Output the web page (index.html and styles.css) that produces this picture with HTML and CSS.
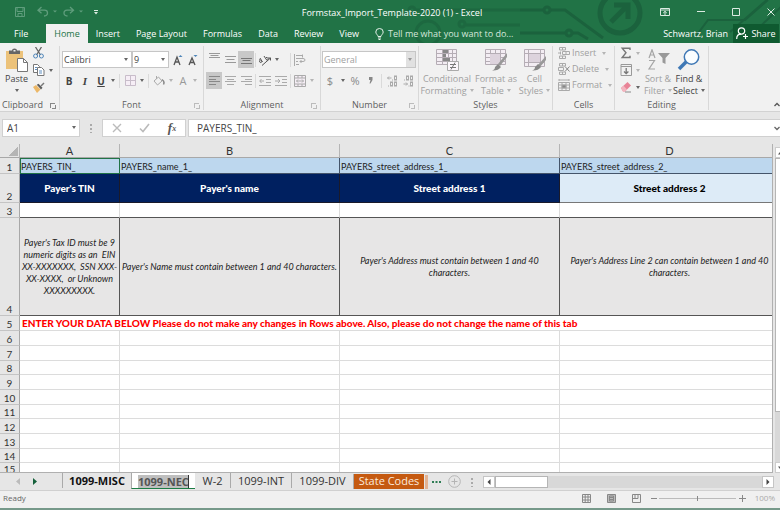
FILE: index.html
```html
<!DOCTYPE html>
<html lang="en">
<head>
<meta charset="utf-8">
<title>Formstax_Import_Template-2020 (1) - Excel</title>
<link rel="stylesheet" href="styles.css">
</head>
<body>
<div class="app">
<header class="top">
  <svg class="circuit" width="380" height="43" viewBox="0 0 380 43" fill="none" stroke="#1b623d" stroke-width="3">
    <g opacity=".6"><circle cx="12" cy="10" r="3"/><path d="M16 10H120"/><circle cx="28" cy="33" r="12"/>
    <circle cx="62" cy="24" r="3"/><path d="M66 25H120"/></g>
    <path d="M120 10H144M150 10H165L203 38M120 33H166M172 33H178L188 39"/><circle cx="147" cy="10" r="3"/><circle cx="169" cy="33" r="3"/>
    <circle cx="220" cy="13" r="20" stroke-width="5"/><path d="M211 22L228 5M214 5H228V19" stroke-width="5"/>
    <path d="M296 36L308 20H345L368 0M330 32L376 -8M350 36L384 4" stroke-width="2"/>
  </svg>
  <div class="titlebar">
    <div class="quick">
      <button aria-label="Save"><svg width="12" height="12" viewBox="0 0 12 12" fill="none" stroke="#5f9d7c"><path d="M1.500 1.500h9v9h-9zM3 1.500v4h6v-4M4 10.500v-3h4v3"/></svg></button>
      <button aria-label="Undo"><svg width="20" height="12" viewBox="0 0 20 12" fill="none" stroke="#5f9d7c" stroke-width="1.300"><path d="M4.500 1L1 4.200l3.500 3M1 4.200h6.500q3 0 3 2.800t-3.500 3"/><path d="M16 4.500h4l-2 2z" fill="#5f9d7c" stroke="none"/></svg></button>
      <button aria-label="Redo"><svg width="20" height="12" viewBox="0 0 20 12" fill="none" stroke="#5f9d7c" stroke-width="1.300"><path d="M7 1l3.500 3.200L7 7.200M10.500 4.200H4q-3 0-3 2.800t3.500 3"/><path d="M16 4.500h4l-2 2z" fill="#5f9d7c" stroke="none"/></svg></button>
      <button class="customize" aria-label="Customize"><svg width="6" height="12" viewBox="0 0 6 12" fill="#dcebe2"><path d="M1 4h4v1H1zM1 6h4L3 8.500z"/></svg></button>
    </div>
    <h1 class="doc-title">Formstax_Import_Template-2020 (1) - Excel</h1>
    <div class="window-buttons">
      <button aria-label="Ribbon options"><svg width="10" height="8" viewBox="0 0 10 8" fill="none" stroke="#dcebe2"><path d="M.5.5h9v7h-9zM.5 2h9M5 7V3.500M3.200 5L5 3.300 6.800 5"/></svg></button>
      <button aria-label="Minimize"><svg width="8" height="8" viewBox="0 0 8 8" stroke="#dcebe2"><path d="M0 3.500h8"/></svg></button>
      <button aria-label="Maximize"><svg width="8" height="8" viewBox="0 0 8 8" fill="none" stroke="#dcebe2"><path d="M.5.5h7v7h-7z"/></svg></button>
      <button aria-label="Close"><svg width="8" height="8" viewBox="0 0 8 8" stroke="#dcebe2"><path d="M.5.5l7 7M7.500.5l-7 7"/></svg></button>
    </div>
  </div>
  <nav class="menu">
    <a class="file" href="#">File</a><a class="current" href="#">Home</a><a href="#">Insert</a><a href="#">Page Layout</a><a href="#">Formulas</a><a href="#">Data</a><a href="#">Review</a><a href="#">View</a>
    <a class="tell" href="#"><svg width="9" height="12" viewBox="0 0 9 12" fill="none" stroke="#e6f1ea"><path d="M3 8.500C3 7 .8 6 .8 4a3.700 3.500 0 0 1 7.400 0C8.200 6 6 7 6 8.500zM3 10h3M3.500 11.500h2"/></svg>Tell me what you want to do...</a>
    <span class="user">Schwartz, Brian</span>
    <button class="share"><svg width="12" height="13" viewBox="0 0 12 13" fill="none" stroke="#fff" stroke-width="1.200"><circle cx="5.500" cy="4" r="3.200"/><path d="M.7 12c0-3 1.800-4.800 4.300-4.800M7 9.500h5M9.500 7v5"/></svg>Share</button>
  </nav>
</header>

<div class="ribbon">
  <section class="group clipboard">
    <div class="body">
      <button class="paste"><svg width="24" height="24" viewBox="0 0 24 24"><path d="M1 3h17v18H1z" fill="#ecc27a"/><path d="M4 2.500h3Q7 .5 9.500.5T12 2.500h3V6H4z" fill="#666"/><path d="M8.500 2h2v1.500h-2z" fill="#eee"/><path d="M12.500 10.500h6l4 4v9h-10z" fill="#fff" stroke="#777"/><path d="M18.500 10.500v4h4" fill="none" stroke="#777"/></svg><span>Paste</span><i class="caret"></i></button>
      <div class="stack">
        <button aria-label="Cut"><svg width="11" height="12" viewBox="0 0 11 12" fill="none"><path d="M2.500 0L7.500 8M8.500 0L3.500 8" stroke="#666" stroke-width="1.300"/><circle cx="2.600" cy="9" r="2" stroke="#4d84b8"/><circle cx="8.400" cy="9" r="2" stroke="#4d84b8"/></svg></button>
        <button aria-label="Copy" class="with-caret"><svg width="12" height="12" viewBox="0 0 12 12" fill="#fff" stroke="#777"><path d="M.5.5h4l2 2v6h-6z"/><path d="M4.500 3.500h4l2.500 2.500v5.500H4.500z"/><path d="M2 3.500h2M2 5.500h2M6 7h3M6 9h3" stroke="#5f8fc0"/></svg><i class="caret"></i></button>
        <button aria-label="Format painter"><svg width="12" height="11" viewBox="0 0 12 11"><path d="M0 5l3-2 4.500 4.500L4 11z" fill="#ecb868"/><path d="M3.800 2.800l1.700-1 4 4-1.500 1.700z" fill="#5c5c5c"/><path d="M7.500 3.500L10.500.5l1 1-3 3z" fill="#777"/></svg></button>
      </div>
    </div>
    <h2>Clipboard</h2><button class="launcher" aria-label="Clipboard settings"></button>
  </section>

  <section class="group font">
    <div class="body lines">
      <div class="line">
        <label class="combo family"><select aria-label="Font"><option>Calibri</option></select></label>
        <label class="combo size"><select aria-label="Font size"><option>9</option></select></label>
        <button class="grow" aria-label="Increase font size"><svg width="11" height="12" viewBox="0 0 11 12" fill="none"><path d="M1 11L4 3l3 8M2 8h4" stroke="#555" stroke-width="1.300"/><path d="M5.500 3l2-2 2 2z" fill="#4d84b8"/></svg></button>
        <button class="grow" aria-label="Decrease font size"><svg width="11" height="12" viewBox="0 0 11 12" fill="none"><path d="M1 11L4 4l3 7M2 8.500h4" stroke="#555" stroke-width="1.300"/><path d="M5.500 1h4l-2 2z" fill="#4d84b8"/></svg></button>
      </div>
      <div class="line">
        <button class="tool bold">B</button><button class="tool italic">I</button><button class="tool underline">U</button><button class="arrow" aria-label="Underline styles"><i class="caret"></i></button><i class="sep"></i>
        <button class="tool" aria-label="Borders"><svg width="11" height="11" viewBox="0 0 11 11" fill="#f6eef6" stroke="#c8bdca"><path d="M.5.5h10v10H.5zM5.500.5v10M.5 5.500h10"/></svg></button><button class="arrow" aria-label="Border styles"><i class="caret"></i></button><i class="sep"></i>
        <button class="tool" aria-label="Fill color"><svg width="12" height="12" viewBox="0 0 12 12" fill="none" stroke="#aaa"><path d="M1 6l4.500-4L9 6l-4.500 4zM3.500 4V1"/><path d="M9 4.500q3 2 1.500 5" stroke="#888" stroke-width="1.500"/></svg></button><button class="arrow off" aria-label="Fill colors"><i class="caret"></i></button>
        <button class="tool pale">A</button><button class="arrow off" aria-label="Font colors"><i class="caret"></i></button>
      </div>
    </div>
    <h2>Font</h2><button class="launcher off" aria-label="Font settings"></button>
  </section>

  <section class="group alignment">
    <div class="body lines">
      <div class="line">
        <button class="tool" aria-label="Top align"><svg class="up" width="11" height="9" viewBox="0 0 11 9" stroke="#999"><path d="M0 .5h11M1.500 2.500h8M0 4.500h11"/></svg></button>
        <button class="tool" aria-label="Middle align"><svg width="11" height="9" viewBox="0 0 11 9" stroke="#999"><path d="M0 1.500h11M1.500 4.500h8M0 7.500h11"/></svg></button>
        <button class="tool active" aria-label="Bottom align"><svg width="11" height="9" viewBox="0 0 11 9" stroke="#777"><path d="M0 3.500h11M1.500 5.500h8M0 8.500h11"/></svg></button>
        <i class="sep"></i>
        <button class="tool" aria-label="Orientation"><svg width="12" height="12" viewBox="0 0 12 12" fill="none" stroke="#555"><path d="M1 5.500a1.500 1.500 0 1 0 2 2zM3.500 8L1 4M5 2l3 4.500a1.500 1.500 0 1 0-1-3M3 11.500L11.500 4M9 4h2.500v2.500"/></svg></button><button class="arrow" aria-label="Orientation options"><i class="caret"></i></button>
        <i class="sep far"></i>
        <button class="tool" aria-label="Wrap text"><svg width="12" height="12" viewBox="0 0 12 12" fill="none" stroke="#aaa"><path d="M.5 0v12M2 1.500h6M2 4.500h7q2 0 2 1.500t-2 1.500H6M7.500 6L6 7.500 7.500 9M2 7.500h2M2 10.500h3M8.500.5v3"/></svg></button>
      </div>
      <div class="line">
        <button class="tool active" aria-label="Align left"><svg width="11" height="9" viewBox="0 0 11 9" stroke="#888"><path d="M0 .5h11M0 3.500h7M0 5.500h11M0 8.500h7"/></svg></button>
        <button class="tool" aria-label="Center"><svg width="11" height="9" viewBox="0 0 11 9" stroke="#aaa"><path d="M0 .5h11M2 3.500h7M0 5.500h11M2 8.500h7"/></svg></button>
        <button class="tool" aria-label="Align right"><svg width="11" height="9" viewBox="0 0 11 9" stroke="#aaa"><path d="M0 .5h11M4 3.500h7M0 5.500h11M4 8.500h7"/></svg></button>
        <i class="sep"></i>
        <button class="tool" aria-label="Decrease indent"><svg width="12" height="10" viewBox="0 0 12 10" fill="none" stroke="#aaa"><path d="M0 .5h12M7 3.500h5M7 6.500h5M0 9.500h12M5 5H1M2.500 3L.7 5l1.800 2"/></svg></button>
        <button class="tool" aria-label="Increase indent"><svg width="12" height="10" viewBox="0 0 12 10" fill="none" stroke="#aaa"><path d="M0 .5h12M7 3.500h5M7 6.500h5M0 9.500h12M0 5h5M3 3l2 2-2 2"/></svg></button>
        <i class="sep"></i>
        <button class="tool" aria-label="Merge and center"><svg width="12" height="12" viewBox="0 0 12 12" fill="#f6eef6" stroke="#aaa"><path d="M.5.5h11v11H.5zM.5 3h11M.5 9h11M4 .5V3M8 .5V3M4 9v2.500M8 9v2.500M2.500 6h7M4 4.500L2.500 6 4 7.500M8 4.500L9.500 6 8 7.500"/></svg></button><button class="arrow off" aria-label="Merge options"><i class="caret"></i></button>
      </div>
    </div>
    <h2>Alignment</h2><button class="launcher off" aria-label="Alignment settings"></button>
  </section>

  <section class="group number">
    <div class="body lines">
      <div class="line"><label class="combo format"><select aria-label="Number format"><option>General</option></select></label></div>
      <div class="line money">
        <button class="tool sign">$</button><button class="arrow" aria-label="Currency"><i class="caret"></i></button><button class="tool sign">%</button><button class="tool sign comma" aria-label="Comma style"><svg width="4" height="7" viewBox="0 0 4 7" fill="#888"><path d="M0 0h3.500v3L1.500 6.500H.5L1.500 3H0z"/></svg></button><i class="sep"></i>
        <button class="tool" aria-label="Increase decimal"><svg width="11" height="12" viewBox="0 0 11 12" fill="none" stroke="#aaa"><path d="M.5 3h4M2 1.500L.5 3 2 4.500M5.500 4.500v1"/><rect x="7.500" y="1" width="2" height="4"/><rect x="3.500" y="7" width="2" height="4"/><rect x="7.500" y="7" width="2" height="4"/><path d="M1.500 10.500v1"/></svg></button>
        <button class="tool" aria-label="Decrease decimal"><svg width="11" height="12" viewBox="0 0 11 12" fill="none" stroke="#aaa"><path d="M.5 9h4M3 7.500L4.500 9 3 10.500M1.500 4.500v1M6 10.500v1"/><rect x="3.500" y="1" width="2" height="4"/><rect x="7.500" y="1" width="2" height="4"/><rect x="7.500" y="7" width="2" height="4"/></svg></button>
      </div>
    </div>
    <h2>Number</h2><button class="launcher off" aria-label="Number settings"></button>
  </section>

  <section class="group styles">
    <div class="body">
      <button class="big wide off"><svg width="24" height="22" viewBox="0 0 24 22"><path d="M1.500.5h20v15h-20zM1.500 4.500h20M1.500 8.500h20M1.500 12.500h20M7.500.5v15M13.500.5v15M17.500.5v15" fill="#f3edf3" stroke="#b5adb5"/><path d="M8 1h5v3H8zM8 5h3v3H8zM8 9h7v3H8z" fill="#888"/><path d="M12.500 12.500h11v9h-11z" fill="#fbf6fb" stroke="#aaa"/><path d="M15 15.500h6M15 18.500h6M20 13.500l-4 7" stroke="#777"/></svg><span>Conditional</span><span>Formatting<i class="caret"></i></span></button>
      <button class="big mid off"><svg width="24" height="22" viewBox="0 0 24 22"><path d="M1.500.5h20v15h-20zM1.500 4.500h20M1.500 8.500h20M1.500 12.500h20M6.500.5v15M11.500.5v15M16.500.5v15" fill="#f3edf3" stroke="#b5adb5"/><path d="M6 5h10v10H6z" fill="#ddd3dd"/><path d="M23 4v4l-7 9-2-2z" fill="#999"/><path d="M14 15l3 3q-3 4-9 3.500 3-1 3-3.500z" fill="#888"/></svg><span>Format as</span><span>Table<i class="caret"></i></span></button>
      <button class="big slim off"><svg width="24" height="22" viewBox="0 0 24 22"><path d="M1.500.5h20v17h-20zM1.500 4.500h20M1.500 13.500h20M5.500.5v17M17.500.5v17" fill="#f3edf3" stroke="#b5adb5"/><path d="M6 5h11v8H6z" fill="#ddd3dd"/><path d="M23 7v4l-6 7-2-2z" fill="#999"/><path d="M15 15l3 3q-3 4-9 3.500 3-1 3-3.500z" fill="#888"/></svg><span>Cell</span><span>Styles<i class="caret"></i></span></button>
    </div>
    <h2>Styles</h2>
  </section>

  <section class="group cells">
    <div class="body column">
      <button class="row off"><svg width="12" height="12" viewBox="0 0 12 12" fill="none" stroke="#aaa"><path d="M1.500.5h6v2.500h-6zM1.500 9h6v2.500h-6zM4.500.5V3M4.500 9v2.500M4.500 4.500h7v3h-7zM0 6h3M2.500 4.500v3M8 4.500v3"/></svg><span>Insert</span><i class="caret"></i></button>
      <button class="row off"><svg width="12" height="12" viewBox="0 0 12 12" fill="none" stroke="#aaa"><path d="M1.500.5h6v2.500h-6zM1.500 9h6v2.500h-6zM4.500.5V3M4.500 9v2.500M.5 4.500h5v3h-5z"/><path d="M7 3.500l4.500 5M11.500 3.500L7 8.500" stroke="#888"/></svg><span>Delete</span><i class="caret"></i></button>
      <button class="row off"><svg width="12" height="12" viewBox="0 0 12 12" fill="none" stroke="#aaa"><path d="M.5 3.500h11v8H.5zM.5 6h11M.5 9h11M4 3.500v8M8 3.500v8M1 1h10M1 0v2M11 0v2"/><path d="M4 6h4v3H4z" fill="#888"/></svg><span>Format</span><i class="caret"></i></button>
    </div>
    <h2>Cells</h2>
  </section>

  <section class="group editing">
    <div class="body">
      <div class="stack edits">
        <button class="with-caret off" aria-label="AutoSum"><svg width="12" height="12" viewBox="0 0 12 12" fill="none" stroke="#777" stroke-width="1.400"><path d="M10 3V1.200H2.200L6 5.800 2.200 10.500H10V8.700"/></svg><i class="caret"></i></button>
        <button class="with-caret off" aria-label="Fill"><svg width="12" height="12" viewBox="0 0 12 12" fill="none" stroke="#999"><path d="M1 .5h10.500v11H1zM1 2.500h10.500"/><path d="M6.200 4v5.500M4 7.500l2.200 2 2.200-2" stroke="#777" stroke-width="1.300"/></svg><i class="caret"></i></button>
        <button class="with-caret" aria-label="Clear"><svg width="12" height="12" viewBox="0 0 12 12"><path d="M1 7l6.500-6L11 4.500 5 10.500H3z" fill="#e88497"/><path d="M1 7l2.500-2.200L7 8.500l-2 2H3z" fill="#f3b5bf"/><path d="M5 10.500h6v1H5z" fill="#888"/></svg><i class="caret"></i></button>
      </div>
      <button class="big sort off"><svg width="24" height="22" viewBox="0 0 24 22" fill="none" stroke="#a5a5a5" stroke-width="1.200"><path d="M3 9L6 .8 9 9M4 6h4M3 11.500h5.500L3 20h6"/><path d="M12 4h12l-4.500 5v6l-3-1.500V9z" fill="#999" stroke="none"/></svg><span>Sort &amp;</span><span>Filter<i class="caret"></i></span></button>
      <button class="big find"><svg width="24" height="22" viewBox="0 0 24 22"><path d="M2 20l8-8" stroke="#3f78b5" stroke-width="3.500"/><circle cx="14.500" cy="8" r="7.200" fill="#fafdff" stroke="#3f78b5" stroke-width="1.500"/></svg><span>Find &amp;</span><span>Select<i class="caret"></i></span></button>
    </div>
    <h2>Editing</h2>
  </section>
  <button class="collapse" aria-label="Collapse ribbon"><svg width="6" height="5" viewBox="0 0 6 5" fill="none" stroke="#555" stroke-width="1.300"><path d="M.5 4L3 1.500 5.500 4"/></svg></button>
</div>

<div class="formula-bar">
  <label class="combo name-box"><input aria-label="Name box" value="A1"></label>
  <i class="dots"></i>
  <div class="entry">
    <button aria-label="Cancel"><svg width="10" height="10" viewBox="0 0 10 10" stroke="#bbb" stroke-width="1.400"><path d="M1 1l8 8M9 1L1 9"/></svg></button>
    <button aria-label="Enter"><svg width="11" height="10" viewBox="0 0 11 10" fill="none" stroke="#bbb" stroke-width="1.600"><path d="M1 5.500L4 8.500 10 1"/></svg></button>
    <button class="fx" aria-label="Insert function"><em>f</em>x</button>
  </div>
  <input class="formula" aria-label="Formula" value="PAYERS_TIN_">
  <button class="expand" aria-label="Expand formula bar"><svg width="6" height="5" viewBox="0 0 6 5" fill="none" stroke="#666" stroke-width="1.300"><path d="M.5 1L3 3.500 5.500 1"/></svg></button>
</div>

<main class="sheet">
  <div class="viewport">
  <table>
    <colgroup><col class="c-num"><col class="c-a"><col class="c-wide"><col class="c-wide"><col></colgroup>
    <thead><tr><th class="corner"></th><th>A</th><th>B</th><th>C</th><th>D</th></tr></thead>
    <tbody>
      <tr class="keys"><th>1</th><td class="selected">PAYERS_TIN_</td><td>PAYERS_name_1_</td><td>PAYERS_street_address_1_</td><td>PAYERS_street_address_2_</td></tr>
      <tr class="titles"><th>2</th><td>Payer's TIN</td><td>Payer's name</td><td>Street address 1</td><td class="light">Street address 2</td></tr>
      <tr><th>3</th><td></td><td></td><td></td><td></td></tr>
      <tr class="hints"><th>4</th><td class="tin-hint">Payer's Tax ID must be 9<br>numeric digits as an&nbsp; EIN<br>XX-XXXXXXX,&nbsp; SSN XXX-<br>XX-XXXX,&nbsp; or Unknown<br>XXXXXXXXX.</td><td>Payer's Name must contain between 1 and 40 characters.</td><td>Payer's Address must contain between 1 and 40 characters.</td><td>Payer's Address Line 2 can contain between 1 and 40 characters.</td></tr>
      <tr class="notice"><th>5</th><td colspan="4">ENTER YOUR DATA BELOW Please do not make any changes in Rows above. Also, please do not change the name of this tab</td></tr>
      <tr><th>6</th><td></td><td></td><td></td><td></td></tr>
      <tr><th>7</th><td></td><td></td><td></td><td></td></tr>
      <tr class="short"><th>8</th><td></td><td></td><td></td><td></td></tr>
      <tr><th>9</th><td></td><td></td><td></td><td></td></tr>
      <tr><th>10</th><td></td><td></td><td></td><td></td></tr>
      <tr class="short"><th>11</th><td></td><td></td><td></td><td></td></tr>
      <tr><th>12</th><td></td><td></td><td></td><td></td></tr>
      <tr><th>13</th><td></td><td></td><td></td><td></td></tr>
      <tr class="short"><th>14</th><td></td><td></td><td></td><td></td></tr>
      <tr class="last"><th>15</th><td></td><td></td><td></td><td></td></tr>
    </tbody>
  </table>
  </div>
  <div class="vscroll"><button aria-label="Scroll up"><svg width="5" height="4" viewBox="0 0 5 4" fill="#555"><path d="M0 3.500L2.500.5 5 3.500z"/></svg></button><i class="thumb"></i><i class="track"></i><button aria-label="Scroll down"><svg width="5" height="4" viewBox="0 0 5 4" fill="#555"><path d="M0 .5h5L2.500 3.500z"/></svg></button></div>
</main>

<nav class="tabs">
  <button class="step" aria-label="Previous sheet"><svg width="4" height="7" viewBox="0 0 4 7" fill="#bbb"><path d="M4 0v7L0 3.500z"/></svg></button>
  <button class="step next" aria-label="Next sheet"><svg width="4" height="7" viewBox="0 0 4 7" fill="#14603a"><path d="M0 0v7l4-3.500z"/></svg></button>
  <a class="tab strong" href="#">1099-MISC</a>
  <label class="tab editing-name"><input aria-label="Sheet name" value="1099-NEC"></label>
  <a class="tab w2" href="#">W-2</a>
  <a class="tab int" href="#">1099-INT</a>
  <a class="tab div" href="#">1099-DIV</a>
  <a class="tab codes" href="#">State Codes</a>
  <i class="peek"></i>
  <button class="more" aria-label="More sheets"><svg width="9" height="2" viewBox="0 0 9 2" fill="#2e7d54"><path d="M0 0h2v2H0zM3.500 0h2v2h-2zM7 0h2v2H7z"/></svg></button>
  <button class="add" aria-label="New sheet"><svg width="13" height="13" viewBox="0 0 13 13" fill="none" stroke="#b5b5b5"><circle cx="6.500" cy="6.500" r="5.800"/><path d="M6.500 3.500v6M3.500 6.500h6"/></svg></button>
  <i class="dots"></i>
  <div class="hscroll"><button aria-label="Scroll left"><svg width="4" height="6" viewBox="0 0 4 6" fill="#444"><path d="M3.500 0v6L.5 3z"/></svg></button><i class="thumb"></i><i class="track"></i><button aria-label="Scroll right"><svg width="4" height="6" viewBox="0 0 4 6" fill="#444"><path d="M.5 0v6l3-3z"/></svg></button></div>
</nav>

<footer class="status">
  <span class="ready">Ready</span>
  <button aria-label="Normal view"><svg width="9" height="9" viewBox="0 0 9 9" fill="none" stroke="#888"><path d="M.5.5h8v8h-8zM.5 3h8M.5 6h8M3.200.5v8M6 .5v8"/></svg></button>
  <button aria-label="Page layout view"><svg width="9" height="9" viewBox="0 0 9 9" fill="#bbb" stroke="#888"><path d="M.5.5h8v8h-8z"/><path d="M2.500 2h4v5h-4zM3 3.500h3M3 5.500h3"/></svg></button>
  <button aria-label="Page break view"><svg width="9" height="9" viewBox="0 0 9 9" fill="none" stroke="#888"><path d="M.5.5h8v8h-8zM3 .5v4h3v-4M.5 4.500H3"/></svg></button>
  <button class="zoom-out" aria-label="Zoom out"><svg width="6" height="7" viewBox="0 0 6 7" stroke="#888"><path d="M0 3.500h6"/></svg></button>
  <input type="range" aria-label="Zoom" min="10" max="190" value="100">
  <button class="zoom-in" aria-label="Zoom in"><svg width="7" height="7" viewBox="0 0 7 7" stroke="#888"><path d="M0 3.500h7M3.500 0v7"/></svg></button>
  <span class="percent">100%</span>
</footer>
</div>
</body>
</html>
```
FILE: styles.css
```css
* { box-sizing: border-box; }
body { margin: 0; font: 9px/12px "Open Sans", "Noto Sans", sans-serif; color: #444; background: #f0f0f0; }
button, input, select { font: inherit; color: inherit; border: 0; padding: 0; margin: 0; background: none; border-radius: 0; outline: 0; }
button { display: flex; align-items: center; justify-content: center; flex: none; }
a { color: inherit; text-decoration: none; }
svg { display: block; flex: none; }
h1, h2 { margin: 0; font: inherit; }
i { flex: none; }
.app { min-height: 100vh; display: flex; flex-direction: column; overflow: hidden; }

.caret { width: 0; height: 0; border: 2px solid transparent; border-top: 3px solid #666; border-bottom: 0; display: inline-block; }
.off .caret { border-top-color: #b5b5b5; }
.off { color: #a0a0a0; }

.top { position: relative; background: #217346; color: #fff; }
.circuit { position: absolute; right: 0; top: 0; }
.titlebar { position: relative; display: grid; grid-template-columns: 1fr auto 1fr; align-items: center; height: 24px; }
.quick { display: flex; gap: 6px; padding-left: 14px; }
.quick button:first-child { margin-right: 5px; }
.quick .customize { margin-left: 4px; }
.doc-title { padding: 2px 0 0 4px; }
.window-buttons { display: flex; justify-content: flex-end; gap: 27px; padding-right: 5px; }
.menu { position: relative; display: flex; align-items: stretch; height: 19px; line-height: 19px; padding-right: 1px; }
.menu > a { padding: 0 8px; white-space: nowrap; }
.menu .file { padding: 0 18px 0 14px; }
.menu .current { background: #f1f1f1; color: #217346; }
.menu .tell { display: flex; align-items: center; gap: 4px; color: #d5e7dc; }
.user { margin-left: auto; padding-right: 5px; }
.share { width: 46px; background: #0f5a30; gap: 3px; color: #fff; }

.ribbon { display: flex; background: #f1f1f1; height: 69px; border-bottom: 1px solid #d2d2d2; }
.group { position: relative; flex: none; margin-top: 3px; height: 64px; border-right: 1px solid #d8d8d8; display: grid; grid-template-rows: 52px 12px; }
.group h2 { text-align: center; color: #5e5e5e; line-height: 14px; }
.clipboard h2 { padding-right: 14px; }
.body { display: flex; }
.lines { flex-direction: column; padding-top: 5px; gap: 4px; }
.line { display: flex; align-items: center; height: 17px; }
.launcher { position: absolute; right: 4px; bottom: 2px; width: 5px; height: 5px; border: solid #888; border-width: 1px 0 0 1px; }
.launcher::after { content: ""; flex: none; width: 3px; height: 3px; margin: 2px 0 0 2px; border: solid #888; border-width: 0 1px 1px 0; }
.launcher.off { opacity: .5; }
.clipboard { width: 60px; }
.font { width: 144px; }
.alignment { width: 117px; }
.number { width: 98px; }
.styles { width: 134px; }
.cells { width: 62px; }
.editing { width: 94px; }

.paste { flex-direction: column; width: 33px; padding-top: 2px; justify-content: flex-start; line-height: 14px; }
.paste .caret { margin-top: 3px; }
.stack { display: flex; flex-direction: column; gap: 5px; padding-top: 1px; }
.stack button { width: 12px; height: 12px; justify-content: flex-start; }
.stack .with-caret { width: 20px; gap: 4px; }
.edits { padding-left: 5px; width: 27px; }

.combo { position: relative; display: block; flex: none; height: 17px; background: #fff; border: 1px solid #c6c6c6; }
.combo::after { content: ""; position: absolute; right: 3px; top: 6px; border: 2px solid transparent; border-top: 3px solid #666; border-bottom: 0; }
.combo select, .combo input { appearance: none; display: block; width: 100%; height: 15px; line-height: 15px; padding: 0 1px; }
.family { width: 70px; margin-left: 2px; }
.size { width: 37px; margin-right: 2px; }
.format { width: 94px; margin-left: 1px; color: #a0a0a0; }
.format::after { border-top-color: #999; }
.format select { background: linear-gradient(to left, #e1e1e1 9px, #fff 9px); }
.grow { width: 15px; height: 17px; }

.tool { width: 16px; height: 17px; font-size: 10px; }
.font .line + .line { padding-left: 1px; }
.bold { font-weight: 700; }
.italic { font: italic 700 11px "Liberation Serif", serif; }
.underline { font-weight: 700; text-decoration: underline; }
.pale { color: #999; font-size: 11px; }
.sign { color: #888; font-size: 11px; }
.arrow { width: 8px; height: 17px; }
.sep { width: 1px; height: 14px; background: #dadada; margin: 0 2px; }
.alignment .line { padding-left: 2px; }
.alignment .sep { margin: 0 1px; }
.alignment .far { margin-left: 9px; }
.active { background: #c8c8c8; }
.up { margin-bottom: 4px; }
.money { padding-left: 1px; }
.money .arrow { margin-left: 1px; }

.big { flex-direction: column; justify-content: flex-start; padding-top: 3px; white-space: nowrap; }
.big svg { margin-bottom: 2px; }
.big .caret { margin-left: 3px; vertical-align: 2px; }
.wide { width: 56px; }
.mid { width: 42px; }
.slim { width: 35px; }
.sort { width: 32px; }
.find { width: 30px; }
.column { flex-direction: column; gap: 4px; padding: 1px 0 0 5px; }
.row { height: 12px; justify-content: flex-start; gap: 2px; }
.row .caret { margin-left: 4px; }
.collapse { margin: auto 0 4px auto; width: 6px; }

.formula-bar { display: flex; align-items: stretch; background: #e6e6e6; padding: 7px 0 7px 2px; height: 32px; font-size: 10px; }
.formula-bar .combo { height: 18px; border-color: #d0d0d0; width: 78px; }
.formula-bar .combo input { height: 16px; padding-left: 4px; }
.dots { width: 2px; height: 9px; margin: auto 10px; background: repeating-linear-gradient(#aaa 0 2px, transparent 2px 4px); }
.entry { display: flex; align-items: center; justify-content: space-around; width: 84px; background: #fff; border: 1px solid #d0d0d0; margin-right: 2px; }
.fx { font: italic 700 8px "Liberation Serif", serif; color: #555; }
.fx em { font-size: 13px; }
.formula { flex: 1; min-width: 0; background: #fff; border: 1px solid #d0d0d0; border-right: 0; padding-left: 8px; }
.expand { width: 6px; background: #fff; border: solid #d0d0d0; border-width: 1px 0; }

.sheet { display: flex; height: 329px; background: #e6e6e6; }
.viewport { flex: 1; min-width: 0; overflow: hidden; border: solid #b0b0b0; border-width: 0 1px 1px 0; }
table { width: calc(100% + 8px); table-layout: fixed; border-collapse: separate; border-spacing: 0; font: 9px/12px Lato, "Open Sans", sans-serif; color: #222; }
.c-num { width: 20px; }
.c-a { width: 100px; }
.c-wide { width: 28.2%; }
th { background: #e6e6e6; font-weight: 400; padding: 0; color: #333; }
thead th { height: 14px; font-size: 11px; line-height: 13px; border-right: 1px solid #b5b5b5; border-bottom: 1px solid #a8a8a8; }
tbody th { height: 15px; font-size: 10px; line-height: 11px; vertical-align: bottom; border-right: 1px solid #a8a8a8; border-bottom: 1px solid #c4c4c4; }
.short th { height: 14px; }
.last th { height: 12px; border-bottom: 0; }
.corner { background: linear-gradient(135deg, transparent 55%, #b5b5b5 55%) 7px 2px / 11px 10px no-repeat #e6e6e6; }
td { padding: 0 2px; background: #fff; border-right: 1px solid #dcdcdc; border-bottom: 1px solid #dcdcdc; }
.keys th { height: 16px; }
.keys td { background: #bdd7ee; vertical-align: bottom; padding: 0 1px; line-height: 12px; border-color: #44546a; }
.keys .selected { outline: 1px solid #217346; outline-offset: -1px; }
.titles th { height: 29px; }
.titles td { background: #002060; color: #fff; text-align: center; font-weight: 900; font-size: 10px; border-color: #1a1a2a; }
.titles .light { background: #ddebf7; color: #000; border-color: #777; }
.titles + tr td { border-bottom-color: #555; }
.hints th { height: 98px; }
.hints td { background: #e7e6e6; text-align: center; font-style: italic; border-color: #555; }
.hints .tin-hint { padding: 0; white-space: nowrap; }
.notice td { color: #f00; font-weight: 900; font-size: 10px; white-space: nowrap; }
.vscroll { width: 7px; overflow: hidden; display: flex; flex-direction: column; padding: 3px 0 0 2px; }
.vscroll button { width: 11px; height: 11px; background: #fff; border: 1px solid #ccc; }
.vscroll .thumb { width: 11px; height: 254px; background: #fff; border: 1px solid #b5b5b5; }
.vscroll .track { flex: 1; background: #d8d8d8; }

.tabs { display: flex; height: 18px; background: #e6e6e6; font: 11px/15px "Open Sans", sans-serif; color: #333; border-bottom: 1px solid #d0d0d0; }
.step { width: 17px; }
.step:first-child { margin-left: 9px; }
.next { margin-right: 19px; }
.tab { flex: none; height: 15px; text-align: center; white-space: nowrap; border-left: 1px solid #aaa; }
.strong { font-weight: 700; color: #111; width: 69px; }
.editing-name { width: 64px; height: 16px; background: #fff; border-bottom: 1px solid #1c7d45; padding: 2px 6px 0; }
.editing-name input { display: block; width: 51px; height: 13px; line-height: 13px; background: #bfbfbf; font-weight: 700; color: #555; border-right: 1px solid #333; }
.w2 { width: 35px; border-left: 0; }
.int { width: 61px; }
.div { width: 62px; }
.codes { width: 71px; background: #c55a11; color: #fbeadd; border-left: 1px solid #aaa; margin-top: 1px; line-height: 13px; }
.peek { width: 3px; height: 14px; margin: 2px 0 0 1px; background: #e3b393; }
.more { margin-left: 4px; width: 9px; }
.add { margin-left: 7px; }
.tabs .dots { margin: 5px 10px 0 10px; }
.hscroll { display: flex; flex: 1; min-width: 0; height: 12px; margin: 3px 6px 0 0; }
.hscroll button { width: 12px; background: #fff; border: 1px solid #c5c5c5; }
.hscroll .thumb { width: 53px; background: #fff; border: 1px solid #b5b5b5; }
.hscroll .track { flex: 1; background: #d8d8d8; }

.status { flex: none; display: flex; align-items: center; height: 19px; padding: 0 5px 3px 3px; border-bottom: 2px solid #76998a; font-size: 8px; color: #666; }
.ready { margin-right: auto; }
.status button { margin-right: 16px; }
.status .zoom-out { margin: 0 2px 0 -6px; }
.status .zoom-in { margin: 0 9px 0 3px; }
.status input { appearance: none; width: 77px; height: 7px; background: linear-gradient(#bbb, #bbb) center / 100% 1px no-repeat; }
.status input::-webkit-slider-thumb { appearance: none; width: 1px; height: 5px; background: #888; }
.percent { color: #aaa; }
```
